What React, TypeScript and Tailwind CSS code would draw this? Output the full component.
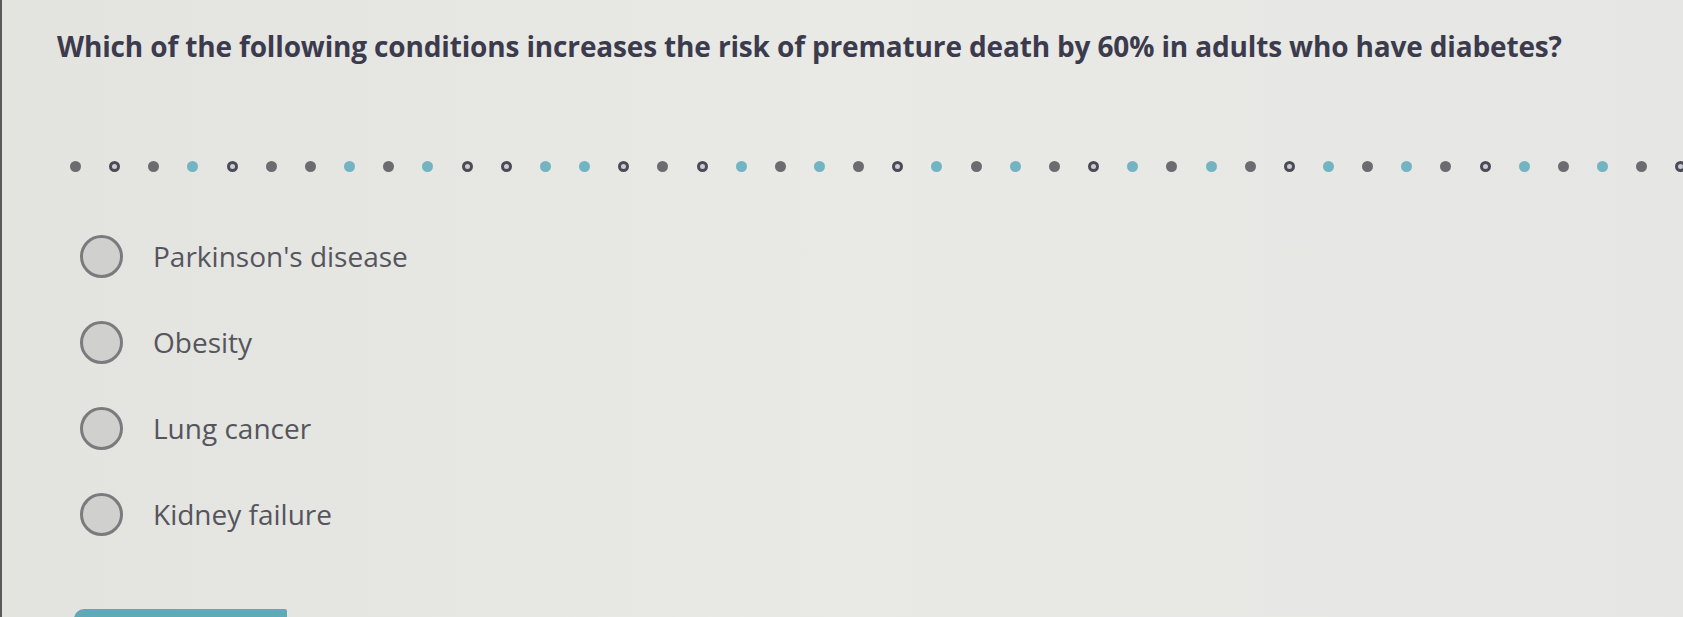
import React from 'react';

type DotKind = 'gray' | 'ring' | 'teal';

const DOTS: DotKind[] = [
  'gray', 'ring', 'gray', 'teal', 'ring', 'gray', 'gray', 'teal', 'gray', 'teal',
  'ring', 'ring', 'teal', 'teal', 'ring', 'gray', 'ring', 'teal', 'gray', 'teal',
  'gray', 'ring', 'teal', 'gray', 'teal', 'gray', 'ring', 'teal', 'gray', 'teal',
  'gray', 'ring', 'teal', 'gray', 'teal', 'gray', 'ring', 'teal', 'gray', 'teal',
  'gray', 'ring',
];

const DOT_CLASSES: Record<DotKind, string> = {
  gray: 'bg-[#6c6c70]',
  teal: 'bg-[#72b4c2]',
  ring: 'bg-[#c9ccd4] border-[3px] border-[#4b4b55]',
};

const OPTIONS = ["Parkinson's disease", 'Obesity', 'Lung cancer', 'Kidney failure'];

const Dot = ({ kind }: { kind: DotKind }) => (
  <span className={`block w-[11px] h-[11px] shrink-0 rounded-full ${DOT_CLASSES[kind]}`} />
);

const Option = ({ label }: { label: string }) => (
  <label className="flex items-center gap-[30px] h-[86px] cursor-pointer">
    <span className="block w-[43px] h-[43px] rounded-full border-[3px] border-[#7b7b7e] bg-[#d0d0ce]" />
    <span className="text-[28px] text-[#55555d]">{label}</span>
  </label>
);

export default function App() {
  return (
    <div
      className="w-[1683px] h-[617px] overflow-hidden border-l-2 border-[#5a5a5a] bg-gradient-to-r from-[#e3e3e0] via-[#e9e9e6] to-[#e6e6e4]"
      style={{ fontFamily: '"Open Sans", "Noto Sans", sans-serif' }}
    >
      <h1 className="pl-[55px] pt-[27px] text-[28px] leading-[38px] font-bold text-[#3b3b4d] tracking-[-0.15px]">
        Which of the following conditions increases the risk of premature death by 60% in adults who have diabetes?
      </h1>

      <div className="flex items-center gap-[28.17px] pl-[68px] mt-[96px] h-[11px]">
        {DOTS.map((d, i) => (
          <Dot key={i} kind={d} />
        ))}
      </div>

      <div className="flex flex-col pl-[78px] mt-[41px]">
        {OPTIONS.map(o => (
          <Option key={o} label={o} />
        ))}
      </div>

      <div className="ml-[72px] mt-[52px] w-[213px] h-[40px] rounded-tl-[10px] rounded-tr-[2px] bg-[#5fa9b9]" />
    </div>
  );
}
